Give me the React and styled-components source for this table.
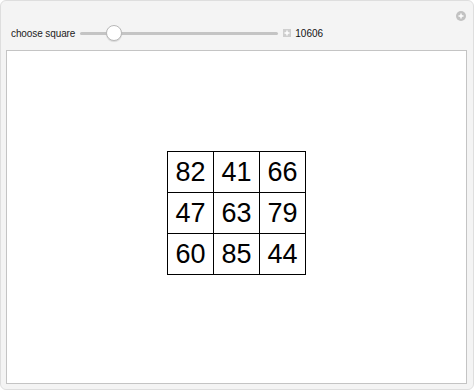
import React from "react";
import styled, { createGlobalStyle } from "styled-components";

const Global = createGlobalStyle`
  html, body { margin: 0; padding: 0; background: #ffffff; }
  body { font-family: "Liberation Sans", Arial, sans-serif; }
`;

const Frame = styled.div`
  position: relative;
  box-sizing: border-box;
  width: 474px;
  height: 390px;
  border: 1px solid #dedede;
  border-radius: 6px;
  background: #f4f4f4;
  padding: 0 6px 5px 5px;
  display: flex;
  flex-direction: column;
`;

const CornerButton = styled.div`
  position: absolute;
  top: 10px;
  right: 7px;
  width: 10px;
  height: 10px;
  border-radius: 50%;
  background: #c2c2c2;
  display: flex;
  align-items: center;
  justify-content: center;
`;

const ControlRow = styled.div`
  height: 49px;
  display: flex;
  align-items: center;
  padding-left: 5px;
  padding-top: 15px;
  box-sizing: border-box;
`;

const Label = styled.span`
  font-size: 10px;
  color: #222;
  margin-right: 5px;
  letter-spacing: -0.1px;
`;

const Track = styled.div`
  position: relative;
  width: 198px;
  height: 3px;
  border-radius: 2px;
  background: #c4c4c4;
`;

const Thumb = styled.div`
  position: absolute;
  top: 50%;
  width: 16px;
  height: 16px;
  margin-top: -8px;
  margin-left: -8px;
  border-radius: 50%;
  background: #ffffff;
  border: 1px solid #b8b8b8;
  box-sizing: border-box;
  box-shadow: 0 1px 1px rgba(0, 0, 0, 0.12);
`;

const PlusBox = styled.div`
  width: 8px;
  height: 8px;
  margin-left: 5px;
  background: #cfcfcf;
  display: flex;
  align-items: center;
  justify-content: center;
`;

const Value = styled.span`
  font-size: 10px;
  color: #111;
  margin-left: 4px;
`;

const Content = styled.div`
  flex: 1;
  background: #ffffff;
  border: 1px solid #c4c4c4;
  display: flex;
  align-items: center;
  justify-content: center;
  padding-bottom: 8px;
`;

const Grid = styled.table`
  border-collapse: collapse;
`;

const Cell = styled.td`
  border: 1px solid #000;
  width: 45px;
  height: 40px;
  padding: 0;
  text-align: center;
  vertical-align: middle;
  font-family: "Liberation Sans", Arial, sans-serif;
  font-size: 27px;
  color: #000;
  line-height: 1;
`;

const PlusIcon = ({ size = 6 }) => (
  <svg width={size} height={size} viewBox="0 0 6 6">
    <path d="M3 0.5V5.5M0.5 3H5.5" stroke="#fff" strokeWidth="1.4" />
  </svg>
);

const rows = [
  [82, 41, 66],
  [47, 63, 79],
  [60, 85, 44],
];

export default function App() {
  return (
    <>
      <Global />
      <Frame>
        <CornerButton>
          <PlusIcon size={6} />
        </CornerButton>
        <ControlRow>
          <Label>choose square</Label>
          <Track>
            <Thumb style={{ left: `${((114 - 80) / 198) * 100}%` }} />
          </Track>
          <PlusBox>
            <PlusIcon size={6} />
          </PlusBox>
          <Value>10606</Value>
        </ControlRow>
        <Content>
          <Grid>
            <tbody>
              {rows.map((r, i) => (
                <tr key={i}>
                  {r.map((v, j) => (
                    <Cell key={j}>{v}</Cell>
                  ))}
                </tr>
              ))}
            </tbody>
          </Grid>
        </Content>
      </Frame>
    </>
  );
}
